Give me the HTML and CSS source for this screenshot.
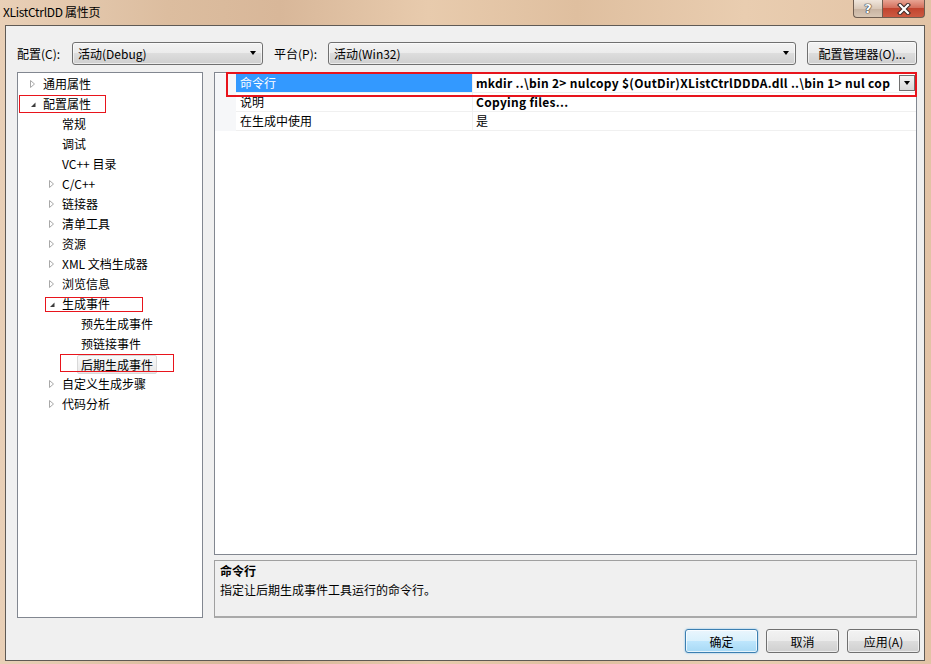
FILE: index.html
```html
<!DOCTYPE html>
<html lang="zh-CN">
<head>
  <meta charset="UTF-8" />
  <title>XListCtrlDD 属性页</title>
  <link rel="stylesheet" href="styles.css">
</head>
<body>
  <div class="window">
    <div class="titlebar">
      <span class="title">XListCtrlDD 属性页</span>
      <div class="caption">
        <span class="cap-help">?</span>
        <span class="cap-close">
          <svg width="14" height="12" viewBox="0 0 14 12">
            <path d="M3 2 L11 10 M11 2 L3 10" stroke="#3a2a28" stroke-width="4.2" stroke-linecap="square"/>
            <path d="M3 2 L11 10 M11 2 L3 10" stroke="#fff" stroke-width="2.2" stroke-linecap="square"/>
          </svg>
        </span>
      </div>
    </div>

    <div class="client">
      <div class="toolbar">
        <span class="lbl lbl-config">配置(C):</span>
        <div class="combo combo-config"><span>活动(Debug)</span><i class="arrow"></i></div>
        <span class="lbl lbl-platform">平台(P):</span>
        <div class="combo combo-platform"><span>活动(Win32)</span><i class="arrow"></i></div>
        <div class="btn btn-manager">配置管理器(O)...</div>
      </div>

      <div class="main">
        <div class="tree">
          <div class="node l0"><span class="tw"><svg width="15" height="20"><path d="M2.5 6.5 L6.5 10 L2.5 13.5 Z" fill="#fff" stroke="#a8a8a8"/></svg></span>通用属性</div>
          <div class="node l0"><span class="tw"><svg width="15" height="20"><path d="M7.5 8.5 L7.5 13 L3 13 Z" fill="#3c3c3c"/></svg></span>配置属性</div>
          <div class="node l1"><span class="tw"></span>常规</div>
          <div class="node l1"><span class="tw"></span>调试</div>
          <div class="node l1"><span class="tw"></span>VC++ 目录</div>
          <div class="node l1"><span class="tw"><svg width="15" height="20"><path d="M2.5 6.5 L6.5 10 L2.5 13.5 Z" fill="#fff" stroke="#a8a8a8"/></svg></span>C/C++</div>
          <div class="node l1"><span class="tw"><svg width="15" height="20"><path d="M2.5 6.5 L6.5 10 L2.5 13.5 Z" fill="#fff" stroke="#a8a8a8"/></svg></span>链接器</div>
          <div class="node l1"><span class="tw"><svg width="15" height="20"><path d="M2.5 6.5 L6.5 10 L2.5 13.5 Z" fill="#fff" stroke="#a8a8a8"/></svg></span>清单工具</div>
          <div class="node l1"><span class="tw"><svg width="15" height="20"><path d="M2.5 6.5 L6.5 10 L2.5 13.5 Z" fill="#fff" stroke="#a8a8a8"/></svg></span>资源</div>
          <div class="node l1"><span class="tw"><svg width="15" height="20"><path d="M2.5 6.5 L6.5 10 L2.5 13.5 Z" fill="#fff" stroke="#a8a8a8"/></svg></span>XML 文档生成器</div>
          <div class="node l1"><span class="tw"><svg width="15" height="20"><path d="M2.5 6.5 L6.5 10 L2.5 13.5 Z" fill="#fff" stroke="#a8a8a8"/></svg></span>浏览信息</div>
          <div class="node l1"><span class="tw"><svg width="15" height="20"><path d="M7.5 8.5 L7.5 13 L3 13 Z" fill="#3c3c3c"/></svg></span>生成事件</div>
          <div class="node l2"><span class="tw"></span>预先生成事件</div>
          <div class="node l2"><span class="tw"></span>预链接事件</div>
          <div class="node l2"><span class="tw"></span><span class="sel">后期生成事件</span></div>
          <div class="node l1"><span class="tw"><svg width="15" height="20"><path d="M2.5 6.5 L6.5 10 L2.5 13.5 Z" fill="#fff" stroke="#a8a8a8"/></svg></span>自定义生成步骤</div>
          <div class="node l1"><span class="tw"><svg width="15" height="20"><path d="M2.5 6.5 L6.5 10 L2.5 13.5 Z" fill="#fff" stroke="#a8a8a8"/></svg></span>代码分析</div>

          <!-- red annotation boxes -->
          <div class="mark mark-config"></div>
          <div class="mark mark-events"></div>
          <div class="mark mark-post"></div>
        </div>

        <div class="right">
          <div class="grid">
            <div class="prop-row">
              <div class="gutter"></div>
              <div class="pname active">命令行</div>
              <div class="pval"><span class="ptext">mkdir ..\bin 2&gt; nulcopy $(OutDir)XListCtrlDDDA.dll ..\bin 1&gt; nul cop</span><span class="drop"><i class="arrow"></i></span></div>
            </div>
            <div class="prop-row">
              <div class="gutter"></div>
              <div class="pname">说明</div>
              <div class="pval"><span class="ptext">Copying files...</span></div>
            </div>
            <div class="prop-row">
              <div class="gutter"></div>
              <div class="pname">在生成中使用</div>
              <div class="pval plain"><span class="ptext">是</span></div>
            </div>
            <div class="mark mark-row"></div>
          </div>
          <div class="desc">
            <div class="desc-title">命令行</div>
            <div class="desc-text">指定让后期生成事件工具运行的命令行。</div>
          </div>
        </div>
      </div>

      <div class="buttons">
        <div class="btn btn-dlg btn-default">确定</div>
        <div class="btn btn-dlg">取消</div>
        <div class="btn btn-dlg">应用(A)</div>
      </div>
    </div>
  </div>
</body>
</html>
```

FILE: styles.css
```css
* { box-sizing: border-box; }
html, body {
  margin: 0;
  padding: 0;
}
body {
  width: 931px;
  height: 664px;
  overflow: hidden;
  font-family: "Noto Sans CJK SC", "Microsoft YaHei", sans-serif;
  font-size: 12px;
  color: #000;
}

.window {
  width: 931px;
  height: 664px;
  display: flex;
  flex-direction: column;
  padding: 0 6px 3px 5px;
  background: linear-gradient(to right, #e9d0b7 0%, #dcbd9f 18%, #d8b799 30%, #e8cbad 46%, #dfbf9f 62%, #e9cdb0 80%, #e2c3a5 100%);
}

/* title bar */
.titlebar {
  height: 25px;
  flex: none;
  display: flex;
  justify-content: space-between;
  align-items: flex-start;
}
.title {
  margin-left: -2px;
  line-height: 24px;
  font-size: 12px;
  letter-spacing: -0.3px;
  color: #000;
}
.caption {
  display: flex;
}
.cap-help, .cap-close {
  height: 18px;
  display: flex;
  align-items: center;
  justify-content: center;
  border: 1px solid #6f5d50;
  border-top: none;
}
.cap-help {
  width: 29px;
  border-radius: 0 0 0 4px;
  border-right: none;
  background: linear-gradient(#f0e6dc, #d9c8b8 50%, #c7b2a0 51%, #d8c6b4);
  color: #fff;
  font-weight: bold;
  font-size: 13px;
  font-family: "DejaVu Sans", sans-serif;
  text-shadow: 0 0 1px #222, 0 0 1px #222, 0 0 1px #222;
}
.cap-close {
  width: 43px;
  border-radius: 0 0 4px 0;
  background: linear-gradient(#e8a493, #d4705d 45%, #c1442f 50%, #cc5a42);
}

/* client area */
.client {
  flex: 1;
  display: flex;
  flex-direction: column;
  border: 1px solid #5f5a55;
  background: #f0f0f0;
  padding: 15px 7px 0 11px;
}

.toolbar {
  height: 24px;
  flex: none;
  display: flex;
  align-items: center;
}
.lbl {
  line-height: 23px;
  white-space: nowrap;
}
.lbl-config { width: 55px; }
.lbl-platform { width: 54px; margin-left: 11px; }

.combo, .btn {
  height: 23px;
  border: 1px solid #707070;
  border-radius: 3px;
  background: linear-gradient(#f3f3f3 0%, #ebebeb 49%, #dddddd 50%, #cfcfcf 100%);
  box-shadow: inset 0 0 0 1px rgba(255, 255, 255, 0.6);
}
.combo {
  display: flex;
  align-items: center;
  justify-content: space-between;
  padding: 0 6px 0 5px;
}
.combo-config { width: 191px; }
.combo-platform { width: 468px; }

.arrow {
  display: block;
  width: 0;
  height: 0;
  border-left: 3.5px solid transparent;
  border-right: 3.5px solid transparent;
  border-top: 4px solid #000;
}

.btn {
  display: flex;
  align-items: center;
  justify-content: center;
  white-space: nowrap;
}
.btn-manager {
  width: 110px;
  height: 24px;
  margin-left: 11px;
}

/* main area */
.main {
  margin-top: 7px;
  height: 546px;
  flex: none;
  display: flex;
  gap: 11px;
}

.tree {
  width: 186px;
  flex: none;
  position: relative;
  background: #fff;
  border: 1px solid #828790;
  padding-top: 1px;
}
.node {
  height: 20px;
  line-height: 20px;
  display: flex;
  align-items: center;
  white-space: nowrap;
}
.node .tw {
  width: 15px;
  height: 20px;
  flex: none;
}
.node .tw svg { display: block; }
.l0 { padding-left: 10px; }
.l1 { padding-left: 29px; }
.l2 { padding-left: 48px; }
.sel {
  margin-left: -4px;
  padding: 0 3px;
  height: 19px;
  line-height: 17px;
  border: 1px solid #d9d9d9;
  border-radius: 2px;
  background: linear-gradient(#fafafa, #e8e8e8);
}

.mark {
  position: absolute;
  border: 1px solid #e8141c;
  pointer-events: none;
}
.mark-config { left: 1px; top: 22px; width: 87px; height: 18px; }
.mark-events { left: 27px; top: 224px; width: 98px; height: 15px; }
.mark-post { left: 42px; top: 281px; width: 114px; height: 18px; }

.right {
  flex: 1;
  min-width: 0;
  display: flex;
  flex-direction: column;
}

.grid {
  height: 483px;
  flex: none;
  position: relative;
  background: #fff;
  border: 1px solid #828790;
  padding-top: 1px;
}
.prop-row {
  display: flex;
  height: 19px;
}
.gutter {
  width: 21px;
  flex: none;
  background: #f6f7f9;
}
.pname, .pval {
  border-bottom: 1px solid #f0f0f0;
  line-height: 18px;
  white-space: nowrap;
}
.pname {
  width: 237px;
  flex: none;
  padding-left: 4px;
  border-right: 1px solid #f0f0f0;
}
.pname.active {
  background: #3399ff;
  color: #fff;
}
.pval {
  flex: 1;
  min-width: 0;
  display: flex;
  align-items: center;
  padding-left: 3px;
  font-weight: bold;
  letter-spacing: 0.3px;
}
.pval.plain { font-weight: normal; }
.ptext {
  flex: 1;
  min-width: 0;
  overflow: hidden;
}
.drop {
  width: 16px;
  height: 16px;
  flex: none;
  margin-right: 1px;
  margin-left: 2px;
  display: flex;
  align-items: center;
  justify-content: center;
  border: 1px solid #707070;
  background: linear-gradient(#f4f4f4, #d8d8d8);
}
.mark-row {
  left: 11px;
  top: -1px;
  right: -1px;
  height: 25px;
  border-width: 2px;
}

.desc {
  margin-top: 5px;
  height: 58px;
  flex: none;
  background: #f0f0f0;
  border: 1px solid #a0a0a0;
  border-bottom: 2px solid #a9a9a9;
  padding: 0 5px;
  line-height: 19px;
}
.desc-title { font-weight: bold; }

/* dialog buttons */
.buttons {
  margin-top: 11px;
  margin-right: -3px;
  display: flex;
  justify-content: flex-end;
  gap: 8px;
}
.btn-dlg {
  width: 73px;
  height: 24px;
}
.btn-default {
  border-color: #3c7fb1;
  background: linear-gradient(#eaf6fd 0%, #d9f0fc 49%, #bee6fd 50%, #a7d9f5 100%);
  box-shadow: inset 0 0 0 1px rgba(255, 255, 255, 0.7), 0 0 2px #6fb7e6;
}
```
